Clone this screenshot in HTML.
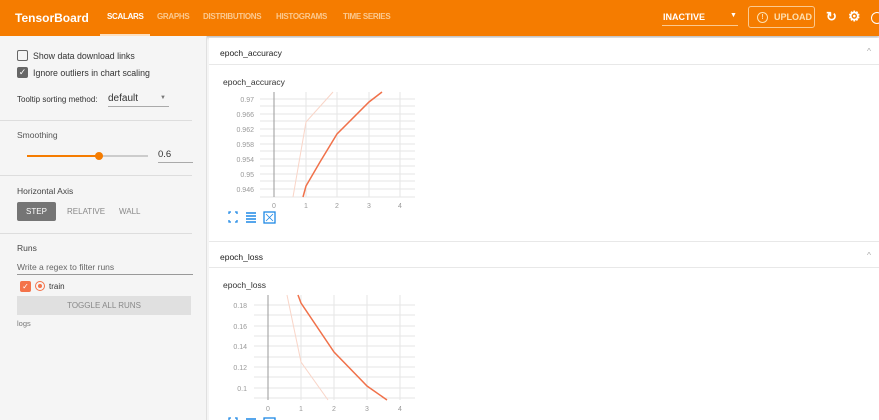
<!DOCTYPE html>
<html><head><meta charset="utf-8"><style>
*{box-sizing:border-box;margin:0;padding:0}
body{width:879px;height:420px;overflow:hidden;font-family:"Liberation Sans",sans-serif;background:#f5f5f5;position:relative;color:#212121}
.top{position:absolute;left:0;top:0;width:879px;height:36px;background:#f57c00;box-shadow:0 1px 3px rgba(0,0,0,.3)}
.top span{position:absolute;top:12px;font-size:8px;font-weight:bold;color:#fbc98f;white-space:nowrap;letter-spacing:-0.3px}
.a{position:absolute;white-space:nowrap}
.side{position:absolute;left:0;top:36px;width:207px;height:384px;background:#f5f5f5;border-right:1px solid #e0e0e0;font-size:8.5px;color:#333}
.hr{position:absolute;left:0;width:192px;border-top:1px solid #ddd}
.main{position:absolute;left:209px;top:38px;width:670px;height:382px;background:#fff}
.sec{position:absolute;left:0;width:670px;height:27px;border-bottom:1px solid #e8e8e8;font-size:8.5px;padding:10px 0 0 11px}
</style></head><body>
<div class="top">
<span style="left:15px;top:11px;font-size:12px;color:#fff;letter-spacing:0">TensorBoard</span>
<span style="left:107px;color:#fff;">SCALARS</span>
<div class="a" style="left:100px;top:34px;width:50px;height:2px;background:#fde0c0"></div>
<span style="left:157px">GRAPHS</span>
<span style="left:203px">DISTRIBUTIONS</span>
<span style="left:276px">HISTOGRAMS</span>
<span style="left:343px">TIME SERIES</span>
<span style="left:663px;color:#fff;font-size:9px;letter-spacing:0">INACTIVE</span>
<span style="left:730px;color:#fff;font-size:7px">▼</span>
<div class="a" style="left:662px;top:25px;width:76px;border-top:1px solid #fbc98f"></div>
<div class="a" style="left:748px;top:6px;width:67px;height:22px;border:1px solid #fbc98f;border-radius:3px"></div>
<div class="a" style="left:757px;top:12px;width:11px;height:11px;border:1.3px solid #fde0b0;border-radius:50%;font-size:7px;color:#fde0b0;text-align:center;line-height:9px;font-weight:bold">!</div>
<span style="left:774px;color:#fde0b0;font-size:9px;letter-spacing:0">UPLOAD</span>
<span style="left:826px;top:9px;color:#fff;font-size:13px">↻</span>
<span style="left:848px;top:8px;color:#fff;font-size:14px">⚙</span>
<div class="a" style="left:871px;top:12px;width:12px;height:12px;border:1.5px solid #fff;border-radius:50%"></div>
</div>
<div class="side">
<div class="a" style="left:17px;top:14px;width:11px;height:11px;border:1.5px solid #666;border-radius:2px"></div>
<div class="a" style="left:33px;top:15px;font-size:8.8px">Show data download links</div>
<div class="a" style="left:17px;top:31px;width:11px;height:11px;background:#666;border-radius:2px;color:#fff;font-size:9px;line-height:11px;text-align:center">✓</div>
<div class="a" style="left:33px;top:32px;font-size:8.8px">Ignore outliers in chart scaling</div>
<div class="a" style="left:17px;top:59px;font-size:8px">Tooltip sorting method:</div>
<div class="a" style="left:108px;top:57px;font-size:10px">default</div>
<div class="a" style="left:160px;top:59px;font-size:6px;color:#777">▼</div>
<div class="a" style="left:108px;top:70px;width:61px;border-top:1px solid #aaa"></div>
<div class="hr" style="top:84px"></div>
<div class="a" style="left:17px;top:94px;color:#555">Smoothing</div>
<div class="a" style="left:27px;top:119px;width:72px;height:2px;background:#f57c00"></div>
<div class="a" style="left:99px;top:119px;width:49px;height:2px;background:#ccc"></div>
<div class="a" style="left:95px;top:116px;width:8px;height:8px;border-radius:50%;background:#f57c00"></div>
<div class="a" style="left:158px;top:113px;font-size:9.5px">0.6</div>
<div class="a" style="left:158px;top:126px;width:35px;border-top:1px solid #aaa"></div>
<div class="hr" style="top:139px"></div>
<div class="a" style="left:17px;top:150px;color:#444">Horizontal Axis</div>
<div class="a" style="left:17px;top:166px;width:39px;height:19px;background:#757575;border-radius:2px;color:#fff;font-size:8px;text-align:center;line-height:19px">STEP</div>
<div class="a" style="left:67px;top:171px;font-size:8px;color:#888">RELATIVE</div>
<div class="a" style="left:119px;top:171px;font-size:8px;color:#888">WALL</div>
<div class="hr" style="top:197px"></div>
<div class="a" style="left:17px;top:207px;color:#444">Runs</div>
<div class="a" style="left:17px;top:226px;color:#666">Write a regex to filter runs</div>
<div class="a" style="left:17px;top:238px;width:176px;border-top:1px solid #999"></div>
<div class="a" style="left:20px;top:245px;width:11px;height:11px;background:#f4734a;border-radius:2px;color:#fff;font-size:8px;line-height:11px;text-align:center">✓</div>
<div class="a" style="left:35px;top:245px;width:10px;height:10px;border:1.5px solid #f4734a;border-radius:50%"></div>
<div class="a" style="left:38px;top:248px;width:4px;height:4px;background:#f4734a;border-radius:50%"></div>
<div class="a" style="left:49px;top:246px;font-size:8px">train</div>
<div class="a" style="left:17px;top:260px;width:174px;height:19px;background:#e0e0e0;color:#888;font-size:8px;text-align:center;line-height:19px">TOGGLE ALL RUNS</div>
<div class="a" style="left:17px;top:283px;font-size:7.5px;color:#777">logs</div>
</div>
<div class="main">
<div class="sec" style="top:0">epoch_accuracy<span style="position:absolute;right:8px;top:8px;color:#aaa">^</span></div>
<div class="sec" style="top:203px;border-top:1px solid #e8e8e8">epoch_loss<span style="position:absolute;right:8px;top:8px;color:#aaa">^</span></div>
</div>
<svg class="a" style="left:0;top:0" width="879" height="420" font-family="Liberation Sans" font-size="7" fill="#999">
<text x="223" y="85" font-size="8.5" fill="#333">epoch_accuracy</text>
<g stroke="#e6e6e6" stroke-width="1">
<line x1="260" y1="99" x2="415" y2="99"/><line x1="260" y1="114" x2="415" y2="114"/><line x1="260" y1="129" x2="415" y2="129"/><line x1="260" y1="144" x2="415" y2="144"/><line x1="260" y1="159" x2="415" y2="159"/><line x1="260" y1="174" x2="415" y2="174"/><line x1="260" y1="189" x2="415" y2="189"/>
<line x1="260" y1="106" x2="415" y2="106"/><line x1="260" y1="121" x2="415" y2="121"/><line x1="260" y1="136" x2="415" y2="136"/><line x1="260" y1="151" x2="415" y2="151"/><line x1="260" y1="166" x2="415" y2="166"/><line x1="260" y1="181" x2="415" y2="181"/>
<line x1="306" y1="92" x2="306" y2="197"/><line x1="337" y1="92" x2="337" y2="197"/><line x1="369" y1="92" x2="369" y2="197"/><line x1="400" y1="92" x2="400" y2="197"/>
<line x1="260" y1="197" x2="415" y2="197"/>
</g>
<line x1="274" y1="92" x2="274" y2="197" stroke="#999"/>
<g text-anchor="end"><text x="254" y="102">0.97</text><text x="254" y="117">0.966</text><text x="254" y="132">0.962</text><text x="254" y="147">0.958</text><text x="254" y="162">0.954</text><text x="254" y="177">0.95</text><text x="254" y="192">0.946</text></g>
<g text-anchor="middle"><text x="274" y="208">0</text><text x="306" y="208">1</text><text x="337" y="208">2</text><text x="369" y="208">3</text><text x="400" y="208">4</text></g>
<polyline points="293,197 306,122 333,92" fill="none" stroke="#f9d5c8" stroke-width="1"/>
<polyline points="303,197 306,186 320,162 337,134 369,102 382,92" fill="none" stroke="#f0714a" stroke-width="1.5"/>
<g fill="none" stroke="#1e88e5" stroke-width="1.3">
<path d="M229 214v-2h2M235 212h2v2M237 220v2h-2M231 222h-2v-2"/>
<path d="M246 213h10M246 216h10M246 219h10M246 222h10" stroke-width="1.5"/>
<rect x="264" y="212" width="11" height="11"/><path d="M266 214l7 7M273 214l-7 7" stroke-width="0.8"/>
</g>
<text x="223" y="288" font-size="8.5" fill="#333">epoch_loss</text>
<g stroke="#e6e6e6" stroke-width="1">
<line x1="254" y1="305" x2="415" y2="305"/><line x1="254" y1="326" x2="415" y2="326"/><line x1="254" y1="346" x2="415" y2="346"/><line x1="254" y1="367" x2="415" y2="367"/><line x1="254" y1="388" x2="415" y2="388"/>
<line x1="254" y1="315" x2="415" y2="315"/><line x1="254" y1="336" x2="415" y2="336"/><line x1="254" y1="357" x2="415" y2="357"/><line x1="254" y1="377" x2="415" y2="377"/><line x1="254" y1="398" x2="415" y2="398"/>
<line x1="301" y1="295" x2="301" y2="400"/><line x1="334" y1="295" x2="334" y2="400"/><line x1="367" y1="295" x2="367" y2="400"/><line x1="400" y1="295" x2="400" y2="400"/>
</g>
<line x1="268" y1="295" x2="268" y2="400" stroke="#999"/>
<g text-anchor="end"><text x="247" y="308">0.18</text><text x="247" y="329">0.16</text><text x="247" y="349">0.14</text><text x="247" y="370">0.12</text><text x="247" y="391">0.1</text></g>
<g text-anchor="middle"><text x="268" y="411">0</text><text x="301" y="411">1</text><text x="334" y="411">2</text><text x="367" y="411">3</text><text x="400" y="411">4</text></g>
<polyline points="287,295 301,362 328,400" fill="none" stroke="#f9d5c8" stroke-width="1"/>
<polyline points="298,295 301,303 334,352 367,386 387,400" fill="none" stroke="#f0714a" stroke-width="1.5"/>
<g fill="none" stroke="#1e88e5" stroke-width="1.3"><path d="M229 420v-2h2M235 418h2v2"/><path d="M246 419h10" stroke-width="1.5"/><rect x="264" y="418" width="11" height="8"/></g>
</svg>
</body></html>
